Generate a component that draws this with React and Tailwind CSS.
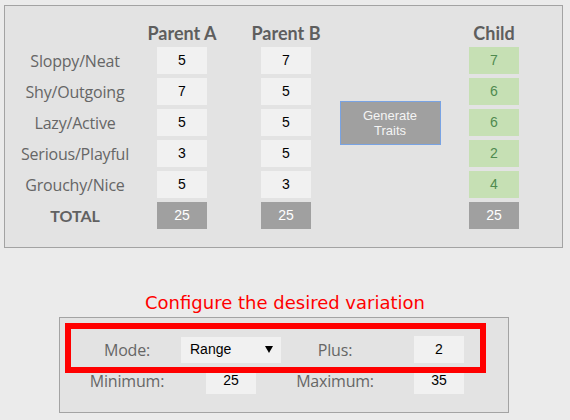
const traits = [
  ["Sloppy/Neat", 5, 7, 7],
  ["Shy/Outgoing", 7, 5, 6],
  ["Lazy/Active", 5, 5, 6],
  ["Serious/Playful", 3, 5, 2],
  ["Grouchy/Nice", 5, 3, 4],
];

const headFont = { fontFamily: "Lato, 'Open Sans', sans-serif" };
const labelFont = { fontFamily: "'Open Sans', Lato, sans-serif" };

function Box({ children, tone = "plain", w = "w-[50px]" }) {
  const tones = {
    plain: "bg-[#f1f1f1] text-black",
    child: "bg-[#c6e0b4] text-[#4f8a4f]",
    total: "bg-[#a0a0a0] text-white",
  };
  return (
    <div
      className={`${w} h-[27px] flex items-center justify-center text-[14px] font-['Liberation_Sans',Arial,sans-serif] ${tones[tone]}`}
    >
      {children}
    </div>
  );
}

function Label({ children, bold }) {
  if (bold) {
    return (
      <div className="text-[#616161] font-bold text-[16px]" style={headFont}>
        {children}
      </div>
    );
  }
  return (
    <div className="text-[#666666] text-[16px] tracking-[-0.2px]" style={labelFont}>
      {children}
    </div>
  );
}

function TraitsPanel() {
  return (
    <div className="ml-[4px] mt-[5px] w-[559px] border border-[#a3a3a3] bg-[#e3e3e3] pt-[17px] pb-[18px] pl-[15px]">
      <div className="grid grid-cols-[110px_104px_104px_104px_104px] grid-rows-[20px_repeat(6,27px)] gap-y-1 justify-items-center items-center">
        <div />
        <div className="text-[18px] leading-[20px] font-bold text-[#5e5e5e]" style={headFont}>Parent A</div>
        <div className="text-[18px] leading-[20px] font-bold text-[#5e5e5e]" style={headFont}>Parent B</div>
        <div />
        <div className="text-[18px] leading-[20px] font-bold text-[#5e5e5e]" style={headFont}>Child</div>

        <button className="col-start-4 row-start-3 row-span-3 self-center w-[101px] h-[44px] bg-[#a0a0a0] border border-[#79a3e3] text-[#f4f4f4] text-[13px] leading-[15px] font-['Liberation_Sans',Arial,sans-serif]">
          Generate
          <br />
          Traits
        </button>

        {traits.map(([name, a, b, c], i) => (
          <>
            <Label key={name}>{name}</Label>
            <Box>{a}</Box>
            <Box>{b}</Box>
            {(i === 0 || i === 4) && <div />}
            <Box tone="child">{c}</Box>
          </>
        ))}

        <Label bold>TOTAL</Label>
        <Box tone="total">25</Box>
        <Box tone="total">25</Box>
        <div />
        <Box tone="total">25</Box>
      </div>
    </div>
  );
}

function VariationPanel() {
  return (
    <>
      <h2 className="mt-[44px] text-center text-[18px] leading-[21px] text-[#ff0000] font-['DejaVu_Sans',Verdana,sans-serif]">
        Configure the desired variation
      </h2>
      <div className="relative mt-[4px] ml-[59px] w-[450px] border border-[#a3a3a3] bg-[#e3e3e3] pt-[18px] pb-[18px] pl-[15px]">
        <div className="grid grid-cols-[104px_104px_104px_104px] grid-rows-[27px_27px] gap-y-1 justify-items-center items-center">
          <Label>Mode:</Label>
          <div className="w-[100px] h-[26px] bg-[#f1f1f1] flex items-center justify-between pl-[9px] pr-[8px] text-[14px] text-black font-['Liberation_Sans',Arial,sans-serif]">
            <span>Range</span>
            <svg width="8" height="7" viewBox="0 0 8 7">
              <path d="M0 0h8L4 7z" fill="#000" />
            </svg>
          </div>
          <Label>Plus:</Label>
          <Box>2</Box>

          <Label>Minimum:</Label>
          <Box>25</Box>
          <Label>Maximum:</Label>
          <Box>35</Box>
        </div>
        <div className="absolute left-[5px] top-[5px] w-[421px] h-[50px] border-[6px] border-[#ff0000]" />
      </div>
    </>
  );
}

export default function App() {
  return (
    <div className="w-[570px] h-[420px] bg-[#ebebeb] overflow-hidden">
      <TraitsPanel />
      <VariationPanel />
    </div>
  );
}
